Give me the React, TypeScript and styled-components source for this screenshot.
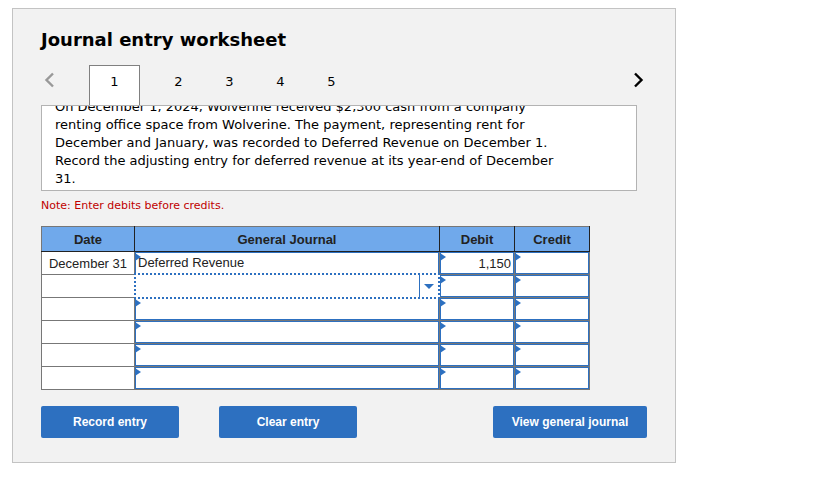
import React, { useState } from "react";
import styled, { createGlobalStyle } from "styled-components";

const BLUE = "#2d70c0";
const GRAY = "#777777";

const GlobalStyle = createGlobalStyle`
  *, *::before, *::after { box-sizing: border-box; }
  body {
    margin: 0;
    background: #ffffff;
    color: #000000;
    font-family: Verdana, "DejaVu Sans", sans-serif;
    font-size: 13px;
  }
  button, input, select { font: inherit; color: inherit; }
`;

const Page = styled.main`
  padding: 8px 12px;
`;

const Panel = styled.section`
  max-width: 664px;
  padding: 20px 28px 24px;
  background: #f2f2f2;
  border: 1px solid #c3c3c3;
`;

const Title = styled.h1`
  margin: 0;
  font-size: 18px;
  line-height: 22px;
  font-weight: bold;
`;

const Steps = styled.nav`
  display: flex;
  align-items: center;
  height: 40px;
  margin-top: 14px;
`;

const StepList = styled.div`
  display: flex;
  flex: 1;
  height: 100%;
  padding-left: 32px;
`;

const Step = styled.button<{ $active: boolean }>`
  width: 51px;
  height: 100%;
  padding: 0 0 8px;
  margin-right: ${(p) => (p.$active ? "13px" : "0")};
  background: ${(p) => (p.$active ? "#ffffff" : "transparent")};
  border: 1px solid ${(p) => (p.$active ? "#808080" : "transparent")};
  border-bottom: 0;
  cursor: pointer;
`;

const Arrow = styled.button`
  display: flex;
  align-items: center;
  justify-content: center;
  width: 16px;
  height: 30px;
  padding: 0;
  margin-bottom: 10px;
  background: none;
  border: 0;
  color: #000000;

  &:disabled { color: #999999; }
`;

const Statement = styled.div`
  display: flex;
  flex-direction: column;
  justify-content: flex-end;
  height: 86px;
  margin-right: 10px;
  padding: 0 66px 2px 13px;
  overflow: hidden;
  background: #ffffff;
  border: 1px solid #b3b3b3;
`;

const StatementText = styled.p`
  margin: 0;
  line-height: 18px;
`;

const Note = styled.p`
  margin: 6px 0 12px;
  color: #c00000;
  font-size: 11px;
  line-height: 17px;
`;

const Journal = styled.table`
  width: 549px;
  max-width: 100%;
  table-layout: fixed;
  border-collapse: collapse;
  background: #ffffff;
  color: #222222;
  font-family: Arial, "Liberation Sans", sans-serif;
`;

const Column = styled.col<{ $width?: number }>`
  width: ${(p) => (p.$width ? `${p.$width}px` : "auto")};
`;

const HeadCell = styled.th`
  height: 25px;
  padding: 2px 0 0;
  background: #70a9eb;
  border: 1px solid #222222;
  border-top-color: ${GRAY};
  line-height: 16px;

  &:first-child { border-left-color: ${GRAY}; }
`;

const Cell = styled.td`
  position: relative;
  height: 23px;
  padding: 0;
  border: 1px solid ${GRAY};
  line-height: 16px;
  text-align: center;
`;

const DateCell = styled(Cell)`
  padding-top: 2px;
`;

const Field = styled.input<{ $amount?: boolean }>`
  display: block;
  width: 100%;
  height: 22px;
  padding: ${(p) => (p.$amount ? "1px 2px 0" : "0 2px 2px")};
  background: #ffffff;
  border: 1px solid ${BLUE};
  border-radius: 0;
  outline: 0;
  text-align: ${(p) => (p.$amount ? "right" : "left")};
`;

const Flag = styled.svg`
  position: absolute;
  top: 1px;
  left: 0;
  width: 6px;
  height: 8px;
  fill: ${BLUE};
  pointer-events: none;
`;

const Picker = styled.div`
  position: absolute;
  inset: -2px -1px;
  z-index: 1;
  display: flex;
  background: #ffffff;
  border: 2px dotted ${BLUE};
`;

const PickerSelect = styled.select`
  flex: 1;
  min-width: 0;
  padding: 0 24px 0 2px;
  appearance: none;
  background: transparent;
  border: 0;
  outline: 0;
`;

const PickerCaret = styled.span`
  position: absolute;
  inset: 0 0 0 auto;
  display: flex;
  align-items: center;
  justify-content: center;
  width: 19px;
  border-left: 1px solid ${BLUE};
  pointer-events: none;
`;

const Actions = styled.div`
  display: flex;
  gap: 40px;
  margin-top: 16px;
`;

const Action = styled.button<{ $wide?: boolean }>`
  width: ${(p) => (p.$wide ? "154px" : "138px")};
  height: 32px;
  padding: 0;
  margin-left: ${(p) => (p.$wide ? "auto" : "0")};
  background: ${BLUE};
  border: 0;
  border-radius: 2px;
  color: #ffffff;
  font-family: Arial, "Liberation Sans", sans-serif;
  font-size: 12px;
  font-weight: bold;
  cursor: pointer;
`;

type Entry = { date: string; account: string; debit: string; credit: string };

const blank: Entry = { date: "", account: "", debit: "", credit: "" };
const entries: Entry[] = [
  { date: "December 31", account: "Deferred Revenue", debit: "1,150", credit: "" },
  blank,
  blank,
  blank,
  blank,
  blank,
];
const ACTIVE_ROW = 1;

function CellFlag() {
  return (
    <Flag viewBox="0 0 6 8" aria-hidden="true">
      <path d="M0 0L6 4L0 8Z" />
    </Flag>
  );
}

function Chevron({ path }: { path: string }) {
  return (
    <svg width="10" height="16" viewBox="0 0 10 16" fill="none" stroke="currentColor" strokeWidth="2.4" aria-hidden="true">
      <path d={path} />
    </svg>
  );
}

function AccountPicker({ label }: { label: string }) {
  return (
    <Picker>
      <PickerSelect aria-label={label} defaultValue="">
        <option value="" />
        <option>Cash</option>
        <option>Deferred Revenue</option>
        <option>Rent Revenue</option>
      </PickerSelect>
      <PickerCaret>
        <svg width="10" height="5" viewBox="0 0 10 5" fill={BLUE} aria-hidden="true">
          <path d="M0 0H10L5 5Z" />
        </svg>
      </PickerCaret>
    </Picker>
  );
}

export default function App() {
  const [step, setStep] = useState(1);

  return (
    <Page>
      <GlobalStyle />
      <Panel>
        <Title>Journal entry worksheet</Title>
        <Steps aria-label="Worksheet entries">
          <Arrow aria-label="Previous entry" disabled={step === 1} onClick={() => setStep(step - 1)}>
            <Chevron path="M9 1.5L2.5 8L9 14.5" />
          </Arrow>
          <StepList>
            {[1, 2, 3, 4, 5].map((n) => (
              <Step key={n} $active={n === step} onClick={() => setStep(n)}>
                {n}
              </Step>
            ))}
          </StepList>
          <Arrow aria-label="Next entry" disabled={step === 5} onClick={() => setStep(step + 1)}>
            <Chevron path="M1 1.5L7.5 8L1 14.5" />
          </Arrow>
        </Steps>
        <Statement>
          <StatementText>
            On December 1, 2024, Wolverine received $2,300 cash from a company renting office space from
            Wolverine. The payment, representing rent for December and January, was recorded to Deferred
            Revenue on December 1. Record the adjusting entry for deferred revenue at its year-end of
            December 31.
          </StatementText>
        </Statement>
        <Note>Note: Enter debits before credits.</Note>
        <Journal>
          <colgroup>
            <Column $width={93} />
            <Column />
            <Column $width={75} />
            <Column $width={75} />
          </colgroup>
          <thead>
            <tr>
              <HeadCell scope="col">Date</HeadCell>
              <HeadCell scope="col">General Journal</HeadCell>
              <HeadCell scope="col">Debit</HeadCell>
              <HeadCell scope="col">Credit</HeadCell>
            </tr>
          </thead>
          <tbody>
            {entries.map((entry, i) => (
              <tr key={i}>
                <DateCell>{entry.date}</DateCell>
                <Cell>
                  {i === ACTIVE_ROW ? (
                    <AccountPicker label={`Account, row ${i + 1}`} />
                  ) : (
                    <>
                      <Field aria-label={`Account, row ${i + 1}`} defaultValue={entry.account} />
                      <CellFlag />
                    </>
                  )}
                </Cell>
                <Cell>
                  <Field $amount aria-label={`Debit, row ${i + 1}`} defaultValue={entry.debit} />
                  <CellFlag />
                </Cell>
                <Cell>
                  <Field $amount aria-label={`Credit, row ${i + 1}`} defaultValue={entry.credit} />
                  <CellFlag />
                </Cell>
              </tr>
            ))}
          </tbody>
        </Journal>
        <Actions>
          <Action>Record entry</Action>
          <Action>Clear entry</Action>
          <Action $wide>View general journal</Action>
        </Actions>
      </Panel>
    </Page>
  );
}
